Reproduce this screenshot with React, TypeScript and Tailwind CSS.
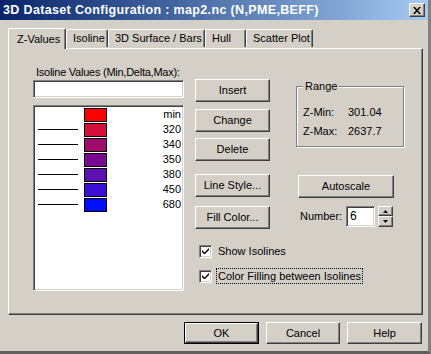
import React from "react";

const raised =
  "border border-t-white border-l-white border-r-[#404040] border-b-[#404040] shadow-[inset_-1px_-1px_#808080]";
const sunken =
  "border border-t-[#808080] border-l-[#808080] border-r-white border-b-white shadow-[inset_1px_1px_#404040,inset_-1px_-1px_#d4d0c8]";

function Btn({ label, className = "" }: { label: string; className?: string }) {
  return (
    <div
      className={`${raised} bg-[#d4d0c8] flex items-center justify-center text-[11px] text-black whitespace-nowrap ${className}`}
    >
      {label}
    </div>
  );
}

function Check({ label, focus = false }: { label: string; focus?: boolean }) {
  return (
    <div className="flex items-center h-[16px]">
      <div className={`${sunken} bg-white w-[13px] h-[13px] flex items-center justify-center`}>
        <svg width="7" height="7" viewBox="0 0 7 7">
          <path d="M0 2 L0 4 L2 6 L3 6 L7 2 L7 0 L2.5 4.5 Z" fill="black" />
        </svg>
      </div>
      <div
        className={`ml-[4px] px-[1px] leading-[14px] text-[11px] whitespace-nowrap ${
          focus ? "border border-dotted border-black" : "border border-transparent"
        }`}
      >
        {label}
      </div>
    </div>
  );
}

const rows = [
  { v: "min", c: "#ff0000", line: false },
  { v: "320", c: "#d4103c", line: true },
  { v: "340", c: "#a00c6c", line: true },
  { v: "350", c: "#7c0890", line: true },
  { v: "380", c: "#5c10b0", line: true },
  { v: "450", c: "#3c10d4", line: true },
  { v: "680", c: "#0010ff", line: true },
];

const tabs = [
  { t: "Z-Values", w: 58, active: true },
  { t: "Isoline", w: 42, active: false },
  { t: "3D Surface / Bars", w: 97, active: false },
  { t: "Hull", w: 41, active: false },
  { t: "Scatter Plot", w: 67, active: false },
];

export default function App() {
  return (
    <div
      className="w-[431px] h-[354px] bg-[#d4d0c8] flex flex-col overflow-hidden border-r-[3px] border-b-[3px] border-r-[#808080] border-b-[#606060] text-black"
      style={{ fontFamily: '"Liberation Sans", Arial, sans-serif' }}
    >
      {/* Title bar */}
      <div className="h-[20px] shrink-0 flex items-center justify-between pl-[3px] pr-[3px] bg-gradient-to-r from-[#0a246a] to-[#a6caf0]">
        <span className="text-white font-bold text-[12.5px] tracking-[0.35px] whitespace-nowrap">
          3D Dataset Configuration : map2.nc (N,PME,BEFF)
        </span>
        <div className={`${raised} bg-[#d4d0c8] w-[16px] h-[14px] flex items-center justify-center`}>
          <svg width="8" height="7" viewBox="0 0 8 7">
            <path d="M0 0 L2 0 L4 2.5 L6 0 L8 0 L5 3.5 L8 7 L6 7 L4 4.5 L2 7 L0 7 L3 3.5 Z" fill="black" />
          </svg>
        </div>
      </div>

      {/* Body */}
      <div className="flex-1 flex flex-col pl-[8px] pr-[5px] pt-[8px]">
        {/* Tabs */}
        <div className="flex items-end h-[20px] relative z-10">
          {tabs.map((tb) => (
            <div
              key={tb.t}
              style={{ width: tb.w }}
              className={`flex items-center text-[11px] whitespace-nowrap bg-[#d4d0c8] border-t border-l border-t-white border-l-white border-r border-r-[#404040] shadow-[inset_-1px_0_#808080] rounded-t-[2px] ${
                tb.active ? "h-[21px] -mb-[1px] pl-[8px]" : "h-[18px] pl-[6px] mb-[1px]"
              }`}
            >
              {tb.t}
            </div>
          ))}
        </div>
        {/* Panel */}
        <div className={`${raised} h-[267px] w-[415px] flex flex-row pl-[24px] pt-[16px]`}>
          {/* Left column */}
          <div className="w-[151px] flex flex-col">
            <div className="text-[11px] leading-[14px] pl-[3px] whitespace-nowrap tracking-[-0.25px]">
              Isoline Values (Min,Delta,Max):
            </div>
            <div className={`${sunken} bg-white h-[18px] mt-[1px]`} />
            <div className={`${sunken} bg-white h-[186px] mt-[7px] flex flex-col pt-[1px] pl-[3px] pr-[2px]`}>
              {rows.map((r) => (
                <div key={r.v} className="h-[15px] flex items-center">
                  <div className="w-[40px] h-[1px] ml-[1px]">
                    {r.line && <div className="w-full h-[1px] bg-black" />}
                  </div>
                  <div
                    className="ml-[6px] w-[23px] h-[14px] border border-black"
                    style={{ backgroundColor: r.c }}
                  />
                  <div className="flex-1 text-right text-[11px] leading-[13px]">{r.v}</div>
                </div>
              ))}
            </div>
          </div>

          {/* Right area */}
          <div className="ml-[11px] flex flex-col">
            <div className="flex flex-row">
              <div className="w-[75px] flex flex-col pt-[14px]">
                <Btn label="Insert" className="h-[23px]" />
                <Btn label="Change" className="h-[23px] mt-[7px]" />
                <Btn label="Delete" className="h-[23px] mt-[6px]" />
                <Btn label="Line Style..." className="h-[23px] mt-[13px]" />
                <Btn label="Fill Color..." className="h-[23px] mt-[9px]" />
              </div>
              <div className="ml-[26px] flex flex-col pt-[21px]">
                <div className="relative w-[108px] h-[61px] border border-[#808080] shadow-[1px_1px_white,inset_1px_1px_white]">
                  <div className="absolute -top-[8px] left-[6px] bg-[#d4d0c8] px-[2px] text-[11px] leading-[14px]">
                    Range
                  </div>
                  <div className="flex flex-col pl-[6px] pt-[16px] text-[11px] leading-[19px]">
                    <div className="flex"><span className="w-[45px]">Z-Min:</span><span>301.04</span></div>
                    <div className="flex"><span className="w-[45px]">Z-Max:</span><span>2637.7</span></div>
                  </div>
                </div>
                <Btn label="Autoscale" className="h-[23px] w-[96px] mt-[28px] ml-[2px]" />
                <div className="flex items-center mt-[8px] ml-[4px]">
                  <span className="text-[11px] w-[46px]">Number:</span>
                  <div className={`${sunken} bg-white w-[29px] h-[21px] text-[12px] pl-[3px] leading-[18px]`}>6</div>
                  <div className="ml-[3px] w-[15px] h-[21px] flex flex-col">
                    <div className={`${raised} bg-[#d4d0c8] h-[10px] flex items-center justify-center`}>
                      <svg width="5" height="3" viewBox="0 0 5 3"><path d="M2.5 0 L5 3 L0 3 Z" fill="black" /></svg>
                    </div>
                    <div className={`${raised} bg-[#d4d0c8] h-[11px] flex items-center justify-center`}>
                      <svg width="5" height="3" viewBox="0 0 5 3"><path d="M0 0 L5 0 L2.5 3 Z" fill="black" /></svg>
                    </div>
                  </div>
                </div>
              </div>
            </div>
            <div className="flex flex-col ml-[4px] mt-[14px] gap-[9px]">
              <Check label="Show Isolines" />
              <Check label="Color Filling between Isolines" focus />
            </div>
          </div>
        </div>

        {/* Bottom buttons */}
        <div className="flex flex-row justify-end gap-[7px] mt-[7px] pr-[1px]">
          <div className="border border-black w-[75px] h-[22px]">
            <Btn label="OK" className="w-full h-full" />
          </div>
          <Btn label="Cancel" className="w-[74px] h-[22px]" />
          <Btn label="Help" className="w-[75px] h-[22px]" />
        </div>
      </div>
    </div>
  );
}
